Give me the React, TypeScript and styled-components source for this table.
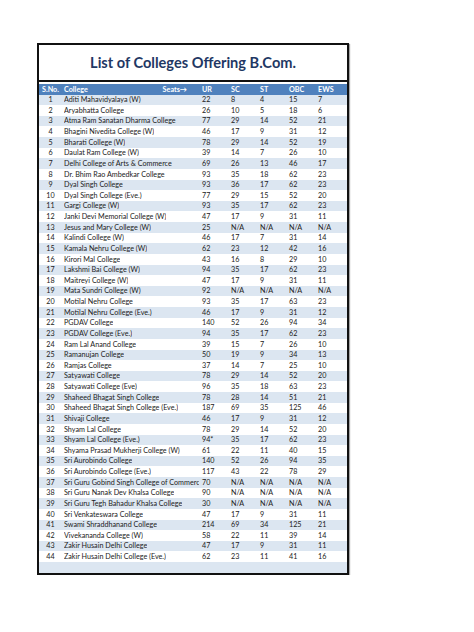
import React from 'react';
import styled, { createGlobalStyle } from 'styled-components';

const GlobalStyle = createGlobalStyle`
  html, body {
    margin: 0;
    padding: 0;
    background: #fff;
  }
  body {
    font-family: Lato, 'Open Sans', 'Liberation Sans', sans-serif;
  }
`;

type College = [string, string, string, string, string, string];

const colleges: College[] = [
  ['Aditi Mahavidyalaya (W)', '22', '8', '4', '15', '7'],
  ['Aryabhatta College', '26', '10', '5', '18', '6'],
  ['Atma Ram Sanatan Dharma College', '77', '29', '14', '52', '21'],
  ['Bhagini Nivedita College (W)', '46', '17', '9', '31', '12'],
  ['Bharati College (W)', '78', '29', '14', '52', '19'],
  ['Daulat Ram College (W)', '39', '14', '7', '26', '10'],
  ['Delhi College of Arts & Commerce', '69', '26', '13', '46', '17'],
  ['Dr. Bhim Rao Ambedkar College', '93', '35', '18', '62', '23'],
  ['Dyal Singh College', '93', '36', '17', '62', '23'],
  ['Dyal Singh College (Eve.)', '77', '29', '15', '52', '20'],
  ['Gargi College (W)', '93', '35', '17', '62', '23'],
  ['Janki Devi Memorial College (W)', '47', '17', '9', '31', '11'],
  ['Jesus and Mary College (W)', '25', 'N/A', 'N/A', 'N/A', 'N/A'],
  ['Kalindi College (W)', '46', '17', '7', '31', '14'],
  ['Kamala Nehru College (W)', '62', '23', '12', '42', '16'],
  ['Kirori Mal College', '43', '16', '8', '29', '10'],
  ['Lakshmi Bai College (W)', '94', '35', '17', '62', '23'],
  ['Maitreyi College (W)', '47', '17', '9', '31', '11'],
  ['Mata Sundri College (W)', '92', 'N/A', 'N/A', 'N/A', 'N/A'],
  ['Motilal Nehru College', '93', '35', '17', '63', '23'],
  ['Motilal Nehru College (Eve.)', '46', '17', '9', '31', '12'],
  ['PGDAV College', '140', '52', '26', '94', '34'],
  ['PGDAV College  (Eve.)', '94', '35', '17', '62', '23'],
  ['Ram Lal Anand College', '39', '15', '7', '26', '10'],
  ['Ramanujan College', '50', '19', '9', '34', '13'],
  ['Ramjas College', '37', '14', '7', '25', '10'],
  ['Satyawati College', '78', '29', '14', '52', '20'],
  ['Satyawati College (Eve)', '96', '35', '18', '63', '23'],
  ['Shaheed Bhagat Singh College', '78', '28', '14', '51', '21'],
  ['Shaheed Bhagat Singh College (Eve.)', '187', '69', '35', '125', '46'],
  ['Shivaji College', '46', '17', '9', '31', '12'],
  ['Shyam Lal College', '78', '29', '14', '52', '20'],
  ['Shyam Lal College (Eve.)', '94*', '35', '17', '62', '23'],
  ['Shyama Prasad Mukherji College (W)', '61', '22', '11', '40', '15'],
  ['Sri Aurobindo College', '140', '52', '26', '94', '35'],
  ['Sri Aurobindo College (Eve.)', '117', '43', '22', '78', '29'],
  ['Sri Guru Gobind Singh College of Commerce', '70', 'N/A', 'N/A', 'N/A', 'N/A'],
  ['Sri Guru Nanak Dev Khalsa College', '90', 'N/A', 'N/A', 'N/A', 'N/A'],
  ['Sri Guru Tegh Bahadur Khalsa College', '30', 'N/A', 'N/A', 'N/A', 'N/A'],
  ['Sri Venkateswara College', '47', '17', '9', '31', '11'],
  ['Swami Shraddhanand College', '214', '69', '34', '125', '21'],
  ['Vivekananda College (W)', '58', '22', '11', '39', '14'],
  ['Zakir Husain Delhi College', '47', '17', '9', '31', '11'],
  ['Zakir Husain Delhi College (Eve.)', '62', '23', '11', '41', '16'],
];

const Page = styled.div`
  padding: 43px 0 0 37px;
`;

const Frame = styled.div`
  width: 308px;
  border: 2px solid #111;
  box-shadow: 1px 1px 1px rgba(0, 0, 0, 0.35);
`;

const TitleBox = styled.div`
  height: 35px;
  display: flex;
  align-items: center;
  justify-content: center;
  border-bottom: 2px solid #111;
  margin-bottom: 2px;
`;

const Title = styled.h1`
  margin: 0;
  font-size: 14.6px;
  font-weight: 700;
  color: #1f3864;
`;

const Table = styled.div`
  display: grid;
  grid-template-columns: 23px 138px 29px 29px 29px 29px 31px;
`;

const Row = styled.div<{ $head?: boolean; $shade?: boolean }>`
  display: contents;

  & > div {
    height: ${(p) => (p.$head ? '10.5px' : '10.63px')};
    background: ${(p) => (p.$head ? '#4f81bd' : p.$shade ? '#dce6f1' : '#fff')};
    color: ${(p) => (p.$head ? '#fff' : '#222')};
    font-weight: ${(p) => (p.$head ? 700 : 400)};
  }
`;

const Cell = styled.div<{ $align?: 'center' | 'left' }>`
  display: flex;
  align-items: center;
  justify-content: ${(p) => (p.$align === 'center' ? 'center' : 'flex-start')};
  padding-left: ${(p) => (p.$align === 'center' ? '0' : '2px')};
  font-size: 7.2px;
  line-height: 1;
  white-space: nowrap;
  overflow: hidden;
`;

const NameCell = styled(Cell)`
  justify-content: space-between;
  padding-right: 13px;
`;

const NameText = styled.span`
  display: block;
  max-width: 135px;
  overflow: hidden;
`;

const App = () => {
  return (
    <Page>
      <GlobalStyle />
      <Frame>
        <TitleBox>
          <Title>List of Colleges Offering B.Com.</Title>
        </TitleBox>
        <Table>
          <Row $head>
            <Cell $align="center">S.No.</Cell>
            <NameCell>
              <span>College</span>
              <span>Seats→</span>
            </NameCell>
            <Cell>UR</Cell>
            <Cell>SC</Cell>
            <Cell>ST</Cell>
            <Cell>OBC</Cell>
            <Cell>EWS</Cell>
          </Row>
          {colleges.map((c, i) => (
            <Row key={c[0]} $shade={i % 2 === 0}>
              <Cell $align="center">{i + 1}</Cell>
              <Cell>
                <NameText>{c[0]}</NameText>
              </Cell>
              <Cell>{c[1]}</Cell>
              <Cell>{c[2]}</Cell>
              <Cell>{c[3]}</Cell>
              <Cell>{c[4]}</Cell>
              <Cell>{c[5]}</Cell>
            </Row>
          ))}
          <Row $shade>
            {Array.from({ length: 7 }).map((_, j) => (
              <Cell key={j} />
            ))}
          </Row>
        </Table>
      </Frame>
    </Page>
  );
};

export default App;
